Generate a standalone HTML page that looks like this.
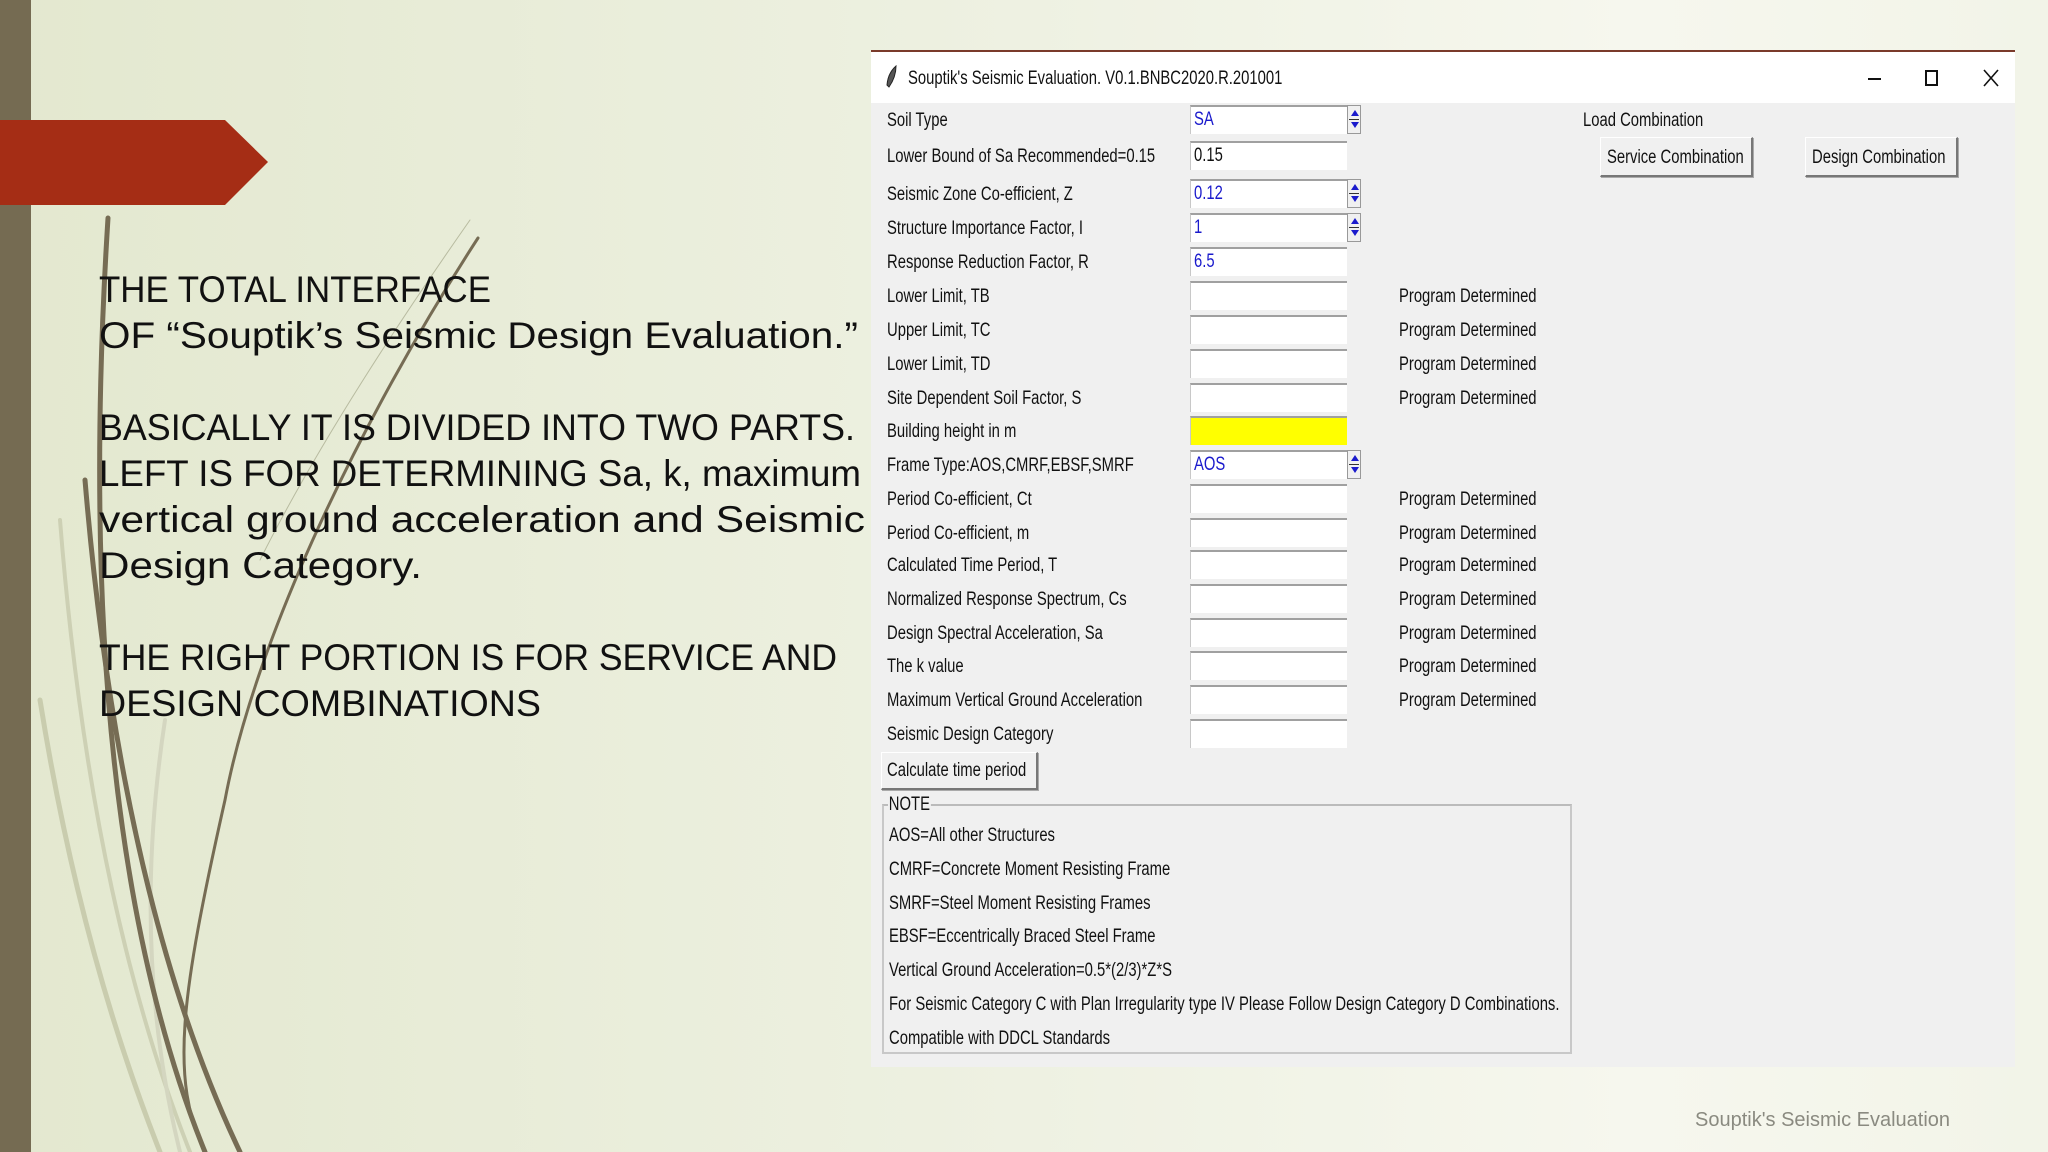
<!DOCTYPE html>
<html><head><meta charset="utf-8"><style>
*{margin:0;padding:0;box-sizing:border-box}
body{width:2048px;height:1152px;overflow:hidden;position:relative;background:linear-gradient(90deg,#e3e8cf 0%,#eef1e2 50%,#f6f7ee 80%,#f2f4e8 100%);font-family:"Liberation Sans",sans-serif}
.abs{position:absolute}
.win{position:absolute;left:871px;top:52px;width:1144px;height:1015px;background:#f0f0f0}
.tb{position:absolute;left:0;top:0;width:100%;height:51px;background:#fff}
.t{position:absolute;white-space:nowrap;font-size:19px;color:#111;transform:scaleX(.78);transform-origin:0 50%;line-height:22px}
.e{position:absolute;left:319px;width:157px;height:29px;background:#fff;border-top:2px solid #a0a0a0;border-left:1px solid #c8c8c8}
.e span{position:absolute;left:3px;top:2px;font-size:19px;color:#1a1acc;transform:scaleX(.78);transform-origin:0 50%;white-space:nowrap}
.sp{position:absolute;left:476px;width:14px;height:29px;border:1px solid #999;background:#f0f0f0}
.sp:before{content:"";position:absolute;left:3px;top:4px;border-left:4px solid transparent;border-right:4px solid transparent;border-bottom:6px solid #1a1acc}
.sp:after{content:"";position:absolute;left:3px;top:16px;border-left:4px solid transparent;border-right:4px solid transparent;border-top:6px solid #1a1acc}
.sp i{position:absolute;left:1px;right:1px;top:13px;height:1px;background:#333}
.btn{position:absolute;background:#f0f0f0;border:1px solid #fff;border-right:2px solid #777;border-bottom:2px solid #777;box-shadow:1px 1px 0 #aaa}
.pd{left:528px}
</style></head><body>
<div class="abs" style="left:0;top:0;width:31px;height:1152px;background:#756b52"></div>
<svg class="abs" style="left:0;top:0" width="900" height="1152">
<path d="M0 120 H225 L268 162 L225 205 H0 Z" fill="#a52d15"/>
<g fill="none" stroke-linecap="round">
<path d="M40 700 Q80 950 160 1152" stroke="#c9ccae" stroke-width="5"/>
<path d="M60 520 Q90 900 190 1152" stroke="#cdd0b4" stroke-width="4"/>
<path d="M165 720 Q130 950 180 1152" stroke="#d4d6c0" stroke-width="4"/>
<path d="M108 218 Q70 820 205 1152" stroke="#766c54" stroke-width="5"/>
<path d="M85 480 Q120 900 240 1152" stroke="#766c54" stroke-width="5"/>
<path d="M478 238 C360 420 255 640 225 800 C180 1000 170 1080 205 1152" stroke="#766c54" stroke-width="3"/>
<path d="M470 220 Q330 420 260 560" stroke="#b8bba0" stroke-width="1"/>
</g>
<g font-family="Liberation Sans, sans-serif" font-size="37" fill="#111" lengthAdjust="spacingAndGlyphs">
<text x="99" y="302" textLength="392" lengthAdjust="spacingAndGlyphs">THE TOTAL INTERFACE</text>
<text x="99" y="348" textLength="759" lengthAdjust="spacingAndGlyphs">OF “Souptik’s Seismic Design Evaluation.”</text>
<text x="99" y="440" textLength="756" lengthAdjust="spacingAndGlyphs">BASICALLY IT IS DIVIDED INTO TWO PARTS.</text>
<text x="99" y="486" textLength="762" lengthAdjust="spacingAndGlyphs">LEFT IS FOR DETERMINING Sa, k, maximum</text>
<text x="99" y="532" textLength="766" lengthAdjust="spacingAndGlyphs">vertical ground acceleration and Seismic</text>
<text x="99" y="578" textLength="323" lengthAdjust="spacingAndGlyphs">Design Category.</text>
<text x="99" y="670" textLength="738" lengthAdjust="spacingAndGlyphs">THE RIGHT PORTION IS FOR SERVICE AND</text>
<text x="99" y="716" textLength="442" lengthAdjust="spacingAndGlyphs">DESIGN COMBINATIONS</text>
</g></svg>
<div class="abs" style="left:1695px;top:1109px;font-size:20px;color:#8a8a80;white-space:nowrap">Souptik's Seismic Evaluation</div>

<div class="abs" style="left:871px;top:50px;width:1144px;height:3px;background:#7a3a2a"></div>
<div class="win">
<div class="tb">
<svg class="abs" style="left:14px;top:13px" width="14" height="24"><path d="M11 1 Q3 8 2 20 L4 22 Q11 12 11 1Z" fill="#555" stroke="#222" stroke-width="1"/></svg>
<div class="t" style="left:37px;top:16px;font-size:19px">Souptik's Seismic Evaluation. V0.1.BNBC2020.R.201001</div>
<div class="abs" style="left:997px;top:26px;width:13px;height:2px;background:#111"></div>
<div class="abs" style="left:1054px;top:18px;width:13px;height:16px;border:2px solid #111"></div>
<svg class="abs" style="left:1112px;top:17px" width="16" height="18"><path d="M1 1 L15 17 M15 1 L1 17" stroke="#111" stroke-width="1.6"/></svg>
</div>

<div class="t" style="left:16px;top:58px">Soil Type</div>
<div class="e" style="top:53px"><span>SA</span></div><div class="sp" style="top:53px"><i></i></div>
<div class="t" style="left:16px;top:94px">Lower Bound of Sa Recommended=0.15</div>
<div class="e" style="top:89px"><span style="color:#111">0.15</span></div>
<div class="t" style="left:16px;top:132px">Seismic Zone Co-efficient, Z</div>
<div class="e" style="top:127px"><span>0.12</span></div><div class="sp" style="top:127px"><i></i></div>
<div class="t" style="left:16px;top:166px">Structure Importance Factor, I</div>
<div class="e" style="top:161px"><span>1</span></div><div class="sp" style="top:161px"><i></i></div>
<div class="t" style="left:16px;top:200px">Response Reduction Factor, R</div>
<div class="e" style="top:195px"><span>6.5</span></div>
<div class="t" style="left:16px;top:234px">Lower Limit, TB</div><div class="e" style="top:229px"></div><div class="t pd" style="top:234px">Program Determined</div>
<div class="t" style="left:16px;top:268px">Upper Limit, TC</div><div class="e" style="top:263px"></div><div class="t pd" style="top:268px">Program Determined</div>
<div class="t" style="left:16px;top:302px">Lower Limit, TD</div><div class="e" style="top:297px"></div><div class="t pd" style="top:302px">Program Determined</div>
<div class="t" style="left:16px;top:336px">Site Dependent Soil Factor, S</div><div class="e" style="top:331px"></div><div class="t pd" style="top:336px">Program Determined</div>
<div class="t" style="left:16px;top:369px">Building height in m</div><div class="e" style="top:364px;background:#ffff00"></div>
<div class="t" style="left:16px;top:403px">Frame Type:AOS,CMRF,EBSF,SMRF</div>
<div class="e" style="top:398px"><span>AOS</span></div><div class="sp" style="top:398px"><i></i></div>
<div class="t" style="left:16px;top:437px">Period Co-efficient, Ct</div><div class="e" style="top:432px"></div><div class="t pd" style="top:437px">Program Determined</div>
<div class="t" style="left:16px;top:471px">Period Co-efficient, m</div><div class="e" style="top:466px"></div><div class="t pd" style="top:471px">Program Determined</div>
<div class="t" style="left:16px;top:503px">Calculated Time Period, T</div><div class="e" style="top:498px"></div><div class="t pd" style="top:503px">Program Determined</div>
<div class="t" style="left:16px;top:537px">Normalized Response Spectrum, Cs</div><div class="e" style="top:532px"></div><div class="t pd" style="top:537px">Program Determined</div>
<div class="t" style="left:16px;top:571px">Design Spectral Acceleration, Sa</div><div class="e" style="top:566px"></div><div class="t pd" style="top:571px">Program Determined</div>
<div class="t" style="left:16px;top:604px">The k value</div><div class="e" style="top:599px"></div><div class="t pd" style="top:604px">Program Determined</div>
<div class="t" style="left:16px;top:638px">Maximum Vertical Ground Acceleration</div><div class="e" style="top:633px"></div><div class="t pd" style="top:638px">Program Determined</div>
<div class="t" style="left:16px;top:672px">Seismic Design Category</div><div class="e" style="top:667px"></div>

<div class="t" style="left:712px;top:58px">Load Combination</div>
<div class="btn" style="left:729px;top:85px;width:153px;height:40px"></div>
<div class="t" style="left:736px;top:95px">Service Combination</div>
<div class="btn" style="left:934px;top:85px;width:153px;height:40px"></div>
<div class="t" style="left:941px;top:95px">Design Combination</div>

<div class="btn" style="left:10px;top:700px;width:157px;height:38px"></div>
<div class="t" style="left:16px;top:708px">Calculate time period</div>

<div class="abs" style="left:11px;top:752px;width:690px;height:250px;border:2px solid #c8c8c8;border-top-color:#bbb"></div>
<div class="t" style="left:17px;top:742px;background:#f0f0f0;padding:0 1px">NOTE</div>
<div class="t" style="left:18px;top:773px">AOS=All other Structures</div>
<div class="t" style="left:18px;top:807px">CMRF=Concrete Moment Resisting Frame</div>
<div class="t" style="left:18px;top:841px">SMRF=Steel Moment Resisting Frames</div>
<div class="t" style="left:18px;top:874px">EBSF=Eccentrically Braced Steel Frame</div>
<div class="t" style="left:18px;top:908px">Vertical Ground Acceleration=0.5*(2/3)*Z*S</div>
<div class="t" style="left:18px;top:942px">For Seismic Category C with Plan Irregularity type IV Please Follow Design Category D Combinations.</div>
<div class="t" style="left:18px;top:976px">Compatible with DDCL Standards</div>
</div>
</body></html>
